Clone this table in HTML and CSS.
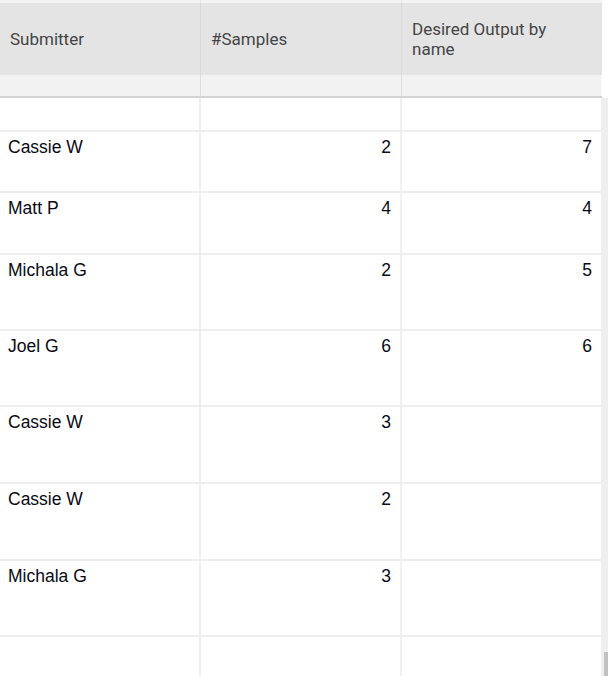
FILE: index.html
```html
<!DOCTYPE html>
<html>
<head>
<meta charset="utf-8">
<link rel="stylesheet" href="styles.css">
</head>
<body>
<div class="sheet">
  <div class="top-strip">
    <div class="strip-cell"></div><div class="strip-cell"></div><div class="strip-cell last"></div>
  </div>
  <div class="head-row">
    <div class="hcell">Submitter</div>
    <div class="hcell">#Samples</div>
    <div class="hcell last">Desired Output by name</div>
  </div>
  <div class="filter-row">
    <div class="fcell"></div>
    <div class="fcell"></div>
    <div class="fcell last"></div>
  </div>
  <div class="body">
    <div class="rows">
      <div class="row h34"><div class="cell"></div><div class="cell num"></div><div class="cell num last"></div></div>
      <div class="row h61"><div class="cell">Cassie W</div><div class="cell num">2</div><div class="cell num last">7</div></div>
      <div class="row h62"><div class="cell">Matt P</div><div class="cell num">4</div><div class="cell num last">4</div></div>
      <div class="row h76"><div class="cell">Michala G</div><div class="cell num">2</div><div class="cell num last">5</div></div>
      <div class="row h76"><div class="cell">Joel G</div><div class="cell num">6</div><div class="cell num last">6</div></div>
      <div class="row h77"><div class="cell">Cassie W</div><div class="cell num">3</div><div class="cell num last"></div></div>
      <div class="row h77"><div class="cell">Cassie W</div><div class="cell num">2</div><div class="cell num last"></div></div>
      <div class="row h76"><div class="cell">Michala G</div><div class="cell num">3</div><div class="cell num last"></div></div>
      <div class="row h40 open"><div class="cell"></div><div class="cell num"></div><div class="cell num last"></div></div>
    </div>
    <div class="scroll"><div class="thumb"></div></div>
  </div>
</div>
</body>
</html>
```

FILE: styles.css
```css
html, body {
  margin: 0;
  padding: 0;
  background: #ffffff;
}
body {
  width: 608px;
  height: 676px;
  overflow: hidden;
}
.sheet {
  display: flex;
  flex-direction: column;
  width: 608px;
  height: 676px;
}
.top-strip {
  display: grid;
  grid-template-columns: 201px 201px 200px;
  height: 3px;
  width: 602px;
  background: #f4f4f4;
}
.strip-cell {
  border-right: 1px solid #e6e6e6;
}
.strip-cell.last { border-right: none; }
.head-row {
  display: grid;
  grid-template-columns: 201px 201px 200px;
  width: 602px;
  height: 72px;
  background: #e4e4e4;
}
.hcell {
  display: flex;
  align-items: center;
  padding: 0 22px 0 10px;
  border-right: 1px solid #d9d9d9;
  font-family: Roboto, "Liberation Sans", sans-serif;
  font-size: 17px;
  line-height: 20px;
  color: #454545;
}
.hcell.last { border-right: none; }
.filter-row {
  display: grid;
  grid-template-columns: 201px 201px 200px;
  width: 602px;
  height: 21px;
  background: #f2f2f2;
  border-bottom: 2px solid #d4d4d4;
}
.fcell {
  border-right: 1px solid #dddddd;
}
.fcell.last { border-right: 1px solid #fafafa; }
.body {
  display: flex;
  flex: 1;
  min-height: 0;
}
.rows {
  width: 601px;
  display: flex;
  flex-direction: column;
}
.row {
  display: grid;
  grid-template-columns: 201px 201px 199px;
  border-bottom: 2px solid #eeeeee;
  box-sizing: border-box;
  flex: none;
}
.row.open { border-bottom: none; }
.h34 { height: 34px; }
.h40 { height: 40px; }
.h61 { height: 61px; }
.h62 { height: 62px; }
.h76 { height: 76px; }
.h77 { height: 77px; }
.cell {
  border-right: 2px solid #f0f0f0;
  padding: 5px 9px 0 8px;
  font-family: "Liberation Sans", Arial, sans-serif;
  font-size: 17.5px;
  line-height: 20px;
  color: #0a0a14;
}
.cell.last { border-right: none; }
.cell.num { text-align: right; }
.scroll {
  width: 7px;
  background: #efefef;
  display: flex;
  flex-direction: column;
  justify-content: flex-end;
  align-items: flex-end;
}
.thumb {
  width: 4px;
  height: 24px;
  background: #c1c1c1;
}
```
